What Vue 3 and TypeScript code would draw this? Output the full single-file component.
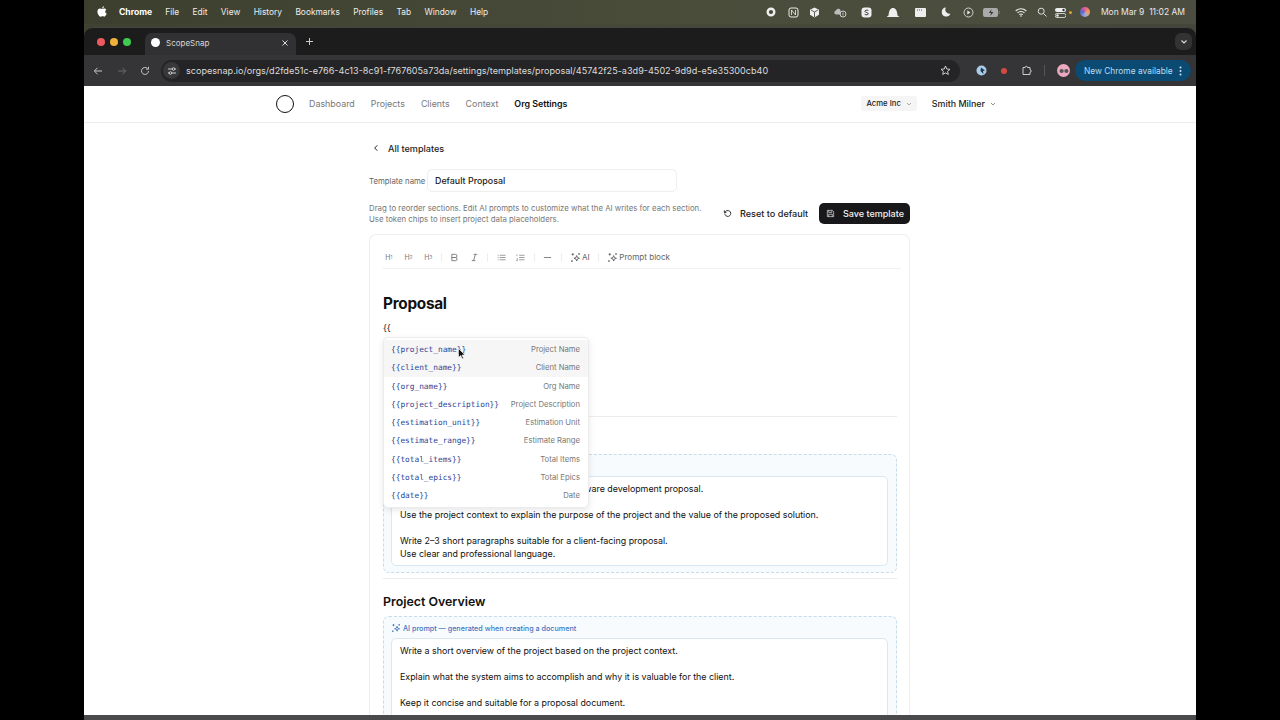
<script setup lang="ts">
const menus = ['File', 'Edit', 'View', 'History', 'Bookmarks', 'Profiles', 'Tab', 'Window', 'Help']
const navLinks = ['Dashboard', 'Projects', 'Clients', 'Context']
const tokens = [
  { code: '{{project_name}}', label: 'Project Name' },
  { code: '{{client_name}}', label: 'Client Name' },
  { code: '{{org_name}}', label: 'Org Name' },
  { code: '{{project_description}}', label: 'Project Description' },
  { code: '{{estimation_unit}}', label: 'Estimation Unit' },
  { code: '{{estimate_range}}', label: 'Estimate Range' },
  { code: '{{total_items}}', label: 'Total Items' },
  { code: '{{total_epics}}', label: 'Total Epics' },
  { code: '{{date}}', label: 'Date' },
]
const sparkle = 'M8.500 4.500l.9 2.600 2.600.9-2.600.9-.9 2.600-.9-2.600L5 8l2.600-.9zM3.500 1.500v3M2 3h3M11.500 1.500v2M10.500 2.500h2M2.500 10.500v2M1.500 11.500h2'
</script>

<template>
  <div class="stage">
    <div class="screen">
      <header class="menubar">
        <svg class="apple" viewBox="0 0 14 16" width="10" height="12"><path fill="#fff" d="M9.800 0c.1 1.200-.9 2.900-2.600 3C7 1.600 8.300.2 9.800 0zM7 3.900c.7 0 1.700-.8 3-.8 1.300 0 2.400.6 3 1.600-2.300 1.400-1.900 4.500.6 5.500-.6 1.700-2 4.400-3.500 4.400-.9 0-1.300-.6-2.500-.6s-1.700.6-2.500.6C3.300 14.600.6 10.800.6 7.600c0-2.800 1.800-4.400 3.500-4.400 1.200 0 2.200.7 2.900.7z"/></svg>
        <strong class="app-name">Chrome</strong>
        <span v-for="m in menus" :key="m" class="menu-item">{{ m }}</span>
        <div class="status">
          <svg width="10" height="10" viewBox="0 0 10 10"><circle cx="5" cy="5" r="3.300" fill="none" stroke="#eee" stroke-width="2.400"/></svg>
          <svg width="11" height="11" viewBox="0 0 11 11"><rect x="1" y="1" width="9" height="9" rx="2" fill="none" stroke="#eee"/><path d="M3.500 8V3l4 5V3" fill="none" stroke="#eee" stroke-width=".8"/></svg>
          <svg width="11" height="11" viewBox="0 0 11 11"><path d="M5.500.5l4.500 2.200v5L5.500 10.500 1 7.700v-5z" fill="#eee"/><path d="M2 3l3.500 2L9 3M5.500 5v5" stroke="#3d3f30" fill="none" stroke-width=".8"/></svg>
          <svg width="13" height="11" viewBox="0 0 13 11"><path d="M1 7a2 2 0 0 1 1-3.500A2.500 2.500 0 0 1 6.500 3v4.500H2z" fill="#bbb"/><circle cx="9" cy="7" r="3" fill="none" stroke="#ddd" stroke-width=".9"/><path d="M9 5.500v3" stroke="#ddd" stroke-width=".8"/></svg>
          <svg width="11" height="11" viewBox="0 0 11 11"><rect x=".5" y=".5" width="10" height="10" rx="3" fill="#eee"/><path d="M7.300 3.500C6 2.700 3.800 3.200 4 4.500s3.200.8 3.200 2.200-2.300 1.400-3.500.6" fill="none" stroke="#333" stroke-width="1"/></svg>
          <svg width="14" height="11" viewBox="0 0 14 11"><path d="M2.500 8.500C3 3 4.500 1 7 1s4 2 4.500 7.500l2 1.500H.5z" fill="#eee"/></svg>
          <svg width="11" height="9" viewBox="0 0 11 9"><rect width="11" height="9" rx="1" fill="#eee"/><path d="M2 2h1M4 2h1M6 2h1" stroke="#333" stroke-width=".8"/></svg>
          <svg width="10" height="10" viewBox="0 0 10 10"><path d="M5 .5A4.500 4.500 0 1 0 9.500 6.500 4 4 0 0 1 5 .5z" fill="#eee"/></svg>
          <svg width="11" height="11" viewBox="0 0 11 11"><circle cx="5.500" cy="5.500" r="4.500" fill="none" stroke="#eee" stroke-width=".8"/><path d="M4.300 3.500v4l3-2z" fill="#eee"/></svg>
          <svg width="17" height="9" viewBox="0 0 17 9"><rect width="15" height="9" rx="2" fill="#aaa"/><rect x="15.500" y="3" width="1.200" height="3" fill="#777"/><path d="M8.500 1L6 5h2.200l-1 3L10.500 4H8z" fill="#333"/></svg>
          <svg width="12" height="9" viewBox="0 0 12 9"><path d="M.7 3a7.500 7.500 0 0 1 10.600 0M2.500 4.900a5 5 0 0 1 7 0M4.300 6.700a2.400 2.400 0 0 1 3.400 0" fill="none" stroke="#eee" stroke-width="1.100"/><circle cx="6" cy="8" r=".8" fill="#eee"/></svg>
          <svg width="10" height="10" viewBox="0 0 10 10"><circle cx="4.200" cy="4.200" r="3" fill="none" stroke="#ddd"/><path d="M6.500 6.500l3 3" stroke="#ddd"/></svg>
          <span class="control-group">
            <svg width="11" height="11" viewBox="0 0 11 11"><rect y="1" width="11" height="4" rx="2" fill="#eee"/><rect y="6.500" width="11" height="4" rx="2" fill="none" stroke="#eee" stroke-width=".8"/><circle cx="8.500" cy="3" r="1.200" fill="#333"/><circle cx="2.500" cy="8.500" r="1.200" fill="#eee"/></svg>
            <i class="orange-dot"></i>
          </span>
          <i class="siri"></i>
        </div>
        <span class="clock">Mon Mar 9&nbsp; 11:02 AM</span>
      </header>

      <div class="tabstrip">
        <div class="lights">
          <i class="light red"></i>
          <i class="light amber"></i>
          <i class="light green"></i>
        </div>
        <div class="tab">
          <i class="favicon"></i>
          <span class="tab-title">ScopeSnap</span>
          <svg width="8" height="8" viewBox="0 0 8 8"><path d="M1.500 1.500l5 5M6.500 1.500l-5 5" stroke="#ddd" stroke-width="1"/></svg>
        </div>
        <svg class="newtab" width="9" height="9" viewBox="0 0 9 9"><path d="M4.500 1v7M1 4.500h7" stroke="#ccc" stroke-width="1"/></svg>
        <span class="tab-search">
          <svg width="8" height="6" viewBox="0 0 8 6"><path d="M1.500 1.500L4 4l2.500-2.500" fill="none" stroke="#ddd" stroke-width="1.100"/></svg>
        </span>
      </div>

      <div class="toolbar">
        <svg width="10" height="10" viewBox="0 0 10 10"><path d="M9 5H1.500M4.500 1.800L1.300 5l3.200 3.200" fill="none" stroke="#c8c8c8" stroke-width="1"/></svg>
        <svg width="10" height="10" viewBox="0 0 10 10"><path d="M1 5h7.500M5.500 1.800L8.700 5 5.500 8.200" fill="none" stroke="#6b6b6b" stroke-width="1"/></svg>
        <svg width="10" height="10" viewBox="0 0 10 10"><path d="M8.500 5A3.500 3.500 0 1 1 7.400 2.400M8.500 .8v2.400H6.100" fill="none" stroke="#c8c8c8" stroke-width="1"/></svg>
        <div class="omnibox">
          <span class="site-icon">
            <svg width="10" height="10" viewBox="0 0 10 10"><path d="M1 3h4M8 3h1M1 7h1M5 7h4" stroke="#ddd" stroke-width=".9"/><circle cx="6.500" cy="3" r="1.300" fill="none" stroke="#ddd" stroke-width=".9"/><circle cx="3.500" cy="7" r="1.300" fill="none" stroke="#ddd" stroke-width=".9"/></svg>
          </span>
          <span class="url">scopesnap.io/orgs/d2fde51c-e766-4c13-8c91-f767605a73da/settings/templates/proposal/45742f25-a3d9-4502-9d9d-e5e35300cb40</span>
          <svg class="star" width="11" height="11" viewBox="0 0 11 11"><path d="M5.500 1l1.300 3 3.200.3-2.400 2.100.7 3.100-2.800-1.600-2.800 1.600.7-3.100L1 4.300 4.200 4z" fill="none" stroke="#ddd" stroke-width=".9"/></svg>
        </div>
        <div class="extensions">
          <svg width="11" height="11" viewBox="0 0 11 11"><circle cx="5.500" cy="5.500" r="5" fill="#a9cde8"/><path d="M5 2.500l4 3-2 .5.500 3L4.500 6z" fill="#234"/></svg>
          <i class="ext-dot"></i>
          <svg width="11" height="11" viewBox="0 0 11 11"><path d="M2 2.500h2.200a1.200 1.200 0 0 1 2.400 0H9v2.300a1.200 1.200 0 0 1 0 2.400V9.500H2z" fill="none" stroke="#ddd" stroke-width=".9"/></svg>
          <i class="ext-sep"></i>
          <span class="avatar">
            <svg width="10" height="6" viewBox="0 0 10 6"><circle cx="2.600" cy="3" r="2.100" fill="#555"/><circle cx="7.400" cy="3" r="2.100" fill="#555"/></svg>
          </span>
        </div>
        <div class="update-pill">
          <span>New Chrome available</span>
          <svg width="3" height="10" viewBox="0 0 3 10"><circle cx="1.500" cy="1.500" r="1" fill="#cfe8f8"/><circle cx="1.500" cy="5" r="1" fill="#cfe8f8"/><circle cx="1.500" cy="8.500" r="1" fill="#cfe8f8"/></svg>
        </div>
      </div>

      <main class="page">
        <nav class="topnav">
          <i class="logo"></i>
          <a v-for="l in navLinks" :key="l" class="nav-link">{{ l }}</a>
          <a class="nav-link current">Org Settings</a>
          <div class="nav-right">
            <span class="org-switch">Acme Inc
              <svg width="6" height="4" viewBox="0 0 6 4"><path d="M1 1l2 2 2-2" fill="none" stroke="#888" stroke-width=".7"/></svg>
            </span>
            <span class="user-menu">Smith Milner
              <svg width="6" height="4" viewBox="0 0 6 4"><path d="M1 1l2 2 2-2" fill="none" stroke="#666" stroke-width=".7"/></svg>
            </span>
          </div>
        </nav>

        <section class="content">
          <div class="back-row">
            <svg width="6" height="8" viewBox="0 0 6 8"><path d="M4.300 1.300L1.700 4l2.600 2.700" fill="none" stroke="#222" stroke-width="1"/></svg>
            <span>All templates</span>
          </div>

          <div class="name-row">
            <label class="name-label">Template name</label>
            <div class="name-input">Default Proposal</div>
          </div>

          <div class="help-row">
            <p class="help">Drag to reorder sections. Edit AI prompts to customize what the AI writes for each section.<br>Use token chips to insert project data placeholders.</p>
            <button class="btn-reset">
              <svg width="9" height="9" viewBox="0 0 10 10"><path d="M2 5a3.300 3.300 0 1 0 1-2.400L1.500 3.800M1.500 1.500v2.300h2.300" fill="none" stroke="#222" stroke-width="1"/></svg>
              Reset to default
            </button>
            <button class="btn-save">
              <svg width="9" height="9" viewBox="0 0 10 10"><path d="M1.500 1.500h5.500l1.500 1.500v5.500h-7zM3 1.500v2.300h3.500V1.500M3 8.500V5.800h4v2.700" fill="none" stroke="#ddd" stroke-width=".8"/></svg>
              Save template
            </button>
          </div>

          <div class="editor">
            <div class="editor-tools">
              <span class="tool t-h">H<sub>1</sub></span>
              <span class="tool t-h">H<sub>2</sub></span>
              <span class="tool t-h">H<sub>3</sub></span>
              <i class="t-sep"></i>
              <span class="tool"><svg width="9" height="9" viewBox="0 0 10 10"><path d="M2 1.500h4a1.700 1.700 0 0 1 0 3.500H2zM2 5h4.500a1.800 1.800 0 0 1 0 3.500H2z" fill="none" stroke="#777" stroke-width="1"/></svg></span>
              <span class="tool"><svg width="9" height="9" viewBox="0 0 10 10"><path d="M4 1.500h4M2 8.500h4M6 1.500L4 8.500" fill="none" stroke="#777" stroke-width="1"/></svg></span>
              <i class="t-sep"></i>
              <span class="tool"><svg width="9" height="9" viewBox="0 0 10 10"><path d="M3 2.500h6.500M3 5h6.500M3 7.500h6.500" stroke="#777" stroke-width=".8"/><path d="M.8 2.500h1M.8 5h1M.8 7.500h1" stroke="#777" stroke-width=".8"/></svg></span>
              <span class="tool"><svg width="9" height="9" viewBox="0 0 10 10"><path d="M3.500 2.500h6M3.500 5h6M3.500 7.500h6" stroke="#777" stroke-width=".8"/><path d="M1 1.500v2M.6 6.500h1.400L.6 8.500H2" fill="none" stroke="#777" stroke-width=".7"/></svg></span>
              <i class="t-sep"></i>
              <span class="tool"><svg width="9" height="9" viewBox="0 0 10 10"><path d="M1 5h8" stroke="#777" stroke-width="1"/></svg></span>
              <i class="t-sep"></i>
              <span class="t-text">
                <svg width="11" height="11" viewBox="0 0 14 14"><path :d="sparkle" fill="none" stroke="#666" stroke-width="1.200"/></svg>AI
              </span>
              <i class="t-sep"></i>
              <span class="t-text">
                <svg width="11" height="11" viewBox="0 0 14 14"><path :d="sparkle" fill="none" stroke="#666" stroke-width="1.200"/></svg>Prompt block
              </span>
            </div>

            <div class="doc">
              <h1 class="doc-title">Proposal</h1>
              <p class="doc-typing">{{ '{{' }}</p>
              <hr class="doc-rule first">
              <h2 class="doc-h2">Introduction</h2>
              <div class="prompt">
                <div class="prompt-label">
                  <svg width="10" height="10" viewBox="0 0 14 14"><path :d="sparkle" fill="none" stroke="#3f74bd" stroke-width="1.200"/></svg>
                  AI prompt — generated when creating a document
                </div>
                <div class="prompt-body">
                  <p>Write a professional introduction for the software development proposal.</p>
                  <p class="blank">&nbsp;</p>
                  <p>Use the project context to explain the purpose of the project and the value of the proposed solution.</p>
                  <p class="blank">&nbsp;</p>
                  <p>Write 2–3 short paragraphs suitable for a client-facing proposal.</p>
                  <p>Use clear and professional language.</p>
                </div>
              </div>
              <hr class="doc-rule">
              <h2 class="doc-h2">Project Overview</h2>
              <div class="prompt">
                <div class="prompt-label">
                  <svg width="10" height="10" viewBox="0 0 14 14"><path :d="sparkle" fill="none" stroke="#3f74bd" stroke-width="1.200"/></svg>
                  AI prompt — generated when creating a document
                </div>
                <div class="prompt-body">
                  <p>Write a short overview of the project based on the project context.</p>
                  <p class="blank">&nbsp;</p>
                  <p>Explain what the system aims to accomplish and why it is valuable for the client.</p>
                  <p class="blank">&nbsp;</p>
                  <p>Keep it concise and suitable for a proposal document.</p>
                </div>
              </div>
            </div>

            <ul class="token-menu">
              <li v-for="(t, i) in tokens" :key="t.code" class="token-row" :class="{ active: i < 2 }">
                <code>{{ t.code }}</code>
                <span>{{ t.label }}</span>
              </li>
            </ul>
            <svg class="cursor" width="8" height="12" viewBox="0 0 8 12"><path d="M.5.500v9l2.200-2 1.500 3.300 1.300-.6L4 7h3z" fill="#111" stroke="#fff" stroke-width=".6"/></svg>
          </div>
        </section>
      </main>
      <div class="bottom-strip"></div>
    </div>
  </div>
</template>

<style>
html, body {
  margin: 0;
  background: #000;
}
</style>

<style scoped>
.stage {
  width: 1280px;
  height: 720px;
  background: #000;
  display: flex;
  justify-content: center;
  overflow: hidden;
  font-family: Inter, "Liberation Sans", sans-serif;
}

.screen {
  width: 1112px;
  height: 720px;
  display: flex;
  flex-direction: column;
  background: linear-gradient(90deg, #3f4231, #454936 50%, #44463a);
}

.menubar {
  height: 24px;
  flex: none;
  display: flex;
  align-items: center;
  padding-left: 13px;
  color: #eee;
  font-size: 8.400px;
  background: linear-gradient(90deg, #3c3f2e, #4a4d3a 55%, #4b4d40);
}

.apple {
  margin-right: 12px;
}

.app-name {
  font-size: 8.600px;
  font-weight: 700;
  color: #fff;
  margin-right: 13px;
}

.menu-item {
  margin-right: 13.400px;
}

.status {
  margin-left: auto;
  display: flex;
  align-items: center;
}

.status > :nth-child(2) { margin-left: 12px; }
.status > :nth-child(3) { margin-left: 10px; }
.status > :nth-child(4) { margin-left: 14px; }
.status > :nth-child(5) { margin-left: 14px; }
.status > :nth-child(6) { margin-left: 14px; }
.status > :nth-child(7) { margin-left: 15px; }
.status > :nth-child(8) { margin-left: 15px; }
.status > :nth-child(9) { margin-left: 12px; }
.status > :nth-child(10) { margin-left: 9px; }
.status > :nth-child(11) { margin-left: 15px; }
.status > :nth-child(12) { margin-left: 10px; }
.status > :nth-child(13) { margin-left: 8px; }
.status > :nth-child(14) { margin-left: 8px; }

.control-group {
  display: flex;
  align-items: center;
  gap: 3px;
}

.orange-dot {
  width: 3px;
  height: 3px;
  border-radius: 50%;
  background: #e0a030;
}

.siri {
  width: 10px;
  height: 10px;
  border-radius: 50%;
  background: conic-gradient(#e85a9a, #f0a050, #9ad, #56c, #e85a9a);
}

.clock {
  margin-left: 11px;
  margin-right: 11px;
  font-size: 8.500px;
  color: #e8e8e8;
}

.tabstrip {
  margin-top: 3px;
  height: 28px;
  flex: none;
  display: flex;
  align-items: flex-end;
  background: #1c1c1d;
  border-top: 1px solid #444;
  border-radius: 9px 9px 0 0;
  box-sizing: border-box;
  padding-left: 13px;
}

.lights {
  display: flex;
  gap: 5px;
  align-self: center;
  width: 48px;
}

.light {
  width: 8px;
  height: 8px;
  border-radius: 50%;
}

.red { background: #ec5a5f; }
.amber { background: #f0b23a; }
.green { background: #3fcb50; }

.tab {
  width: 151px;
  height: 22px;
  box-sizing: border-box;
  display: flex;
  align-items: center;
  padding: 0 7px 3px 6px;
  background: #313133;
  border-radius: 7px 7px 0 0;
  color: #d8d8d8;
  font-size: 8px;
}

.favicon {
  width: 9px;
  height: 9px;
  border-radius: 50%;
  background: #fff;
  margin-right: 6px;
}

.tab-title {
  flex: 1;
}

.newtab {
  align-self: center;
  margin-left: 9px;
}

.tab-search {
  margin-left: auto;
  margin-right: 4px;
  align-self: center;
  width: 17px;
  height: 17px;
  border-radius: 6px;
  background: #333;
  display: flex;
  align-items: center;
  justify-content: center;
}

.toolbar {
  height: 31px;
  flex: none;
  display: flex;
  align-items: center;
  gap: 13.500px;
  padding-left: 9px;
  background: #353537;
  box-sizing: border-box;
}

.omnibox {
  width: 799px;
  height: 22px;
  margin-left: -2.500px;
  display: flex;
  align-items: center;
  border-radius: 11px;
  background: #242426;
  padding-left: 2px;
  box-sizing: border-box;
}

.site-icon {
  width: 17px;
  height: 17px;
  border-radius: 50%;
  background: #38383a;
  display: flex;
  align-items: center;
  justify-content: center;
}

.url {
  margin-left: 6px;
  font-size: 9.110px;
  color: #dcdcdc;
  white-space: nowrap;
}

.star {
  margin-left: auto;
  margin-right: 9px;
}

.extensions {
  display: flex;
  align-items: center;
  gap: 13px;
  margin-left: 2.500px;
}

.ext-dot {
  width: 6px;
  height: 6px;
  border-radius: 50%;
  background: #d6493e;
  margin: 0 1px;
}

.ext-sep {
  width: 1px;
  height: 11px;
  background: #555;
  margin-left: -1px;
}

.avatar {
  width: 13px;
  height: 13px;
  border-radius: 50%;
  background: #eda9c0;
  display: flex;
  align-items: center;
  justify-content: center;
  margin-left: -1px;
}

.update-pill {
  width: 116px;
  height: 21px;
  margin-left: -8.500px;
  box-sizing: border-box;
  padding: 0 9px;
  border-radius: 11px;
  background: #0b4a72;
  color: #b9dcf2;
  font-size: 8.400px;
  display: flex;
  align-items: center;
  justify-content: space-between;
}

.page {
  height: 629px;
  flex: none;
  background: #fff;
  overflow: hidden;
  color: #111;
}

.topnav {
  height: 37px;
  box-sizing: border-box;
  display: flex;
  align-items: center;
  padding-left: 192px;
  padding-bottom: 1px;
  border-bottom: 1px solid #ececec;
  font-size: 8.900px;
}

.logo {
  width: 18px;
  height: 18px;
  box-sizing: border-box;
  border-radius: 50%;
  border: 1.200px solid #111;
  margin-right: 15px;
}

.nav-link {
  color: #777;
  margin-right: 16px;
}

.nav-link.current {
  color: #111;
  font-weight: 600;
}

.nav-right {
  margin-left: auto;
  margin-right: 200px;
  display: flex;
  align-items: center;
  gap: 15px;
}

.org-switch {
  display: flex;
  align-items: center;
  gap: 5px;
  padding: 3px 5px;
  border-radius: 3px;
  background: #f5f5f5;
  font-size: 7.700px;
  font-weight: 500;
  color: #222;
}

.user-menu {
  display: flex;
  align-items: center;
  gap: 5px;
  font-weight: 500;
  color: #222;
}

.content {
  width: 541px;
  margin-left: 285px;
}

.back-row {
  margin-top: 19px;
  height: 12px;
  display: flex;
  align-items: center;
  gap: 9px;
  padding-left: 4px;
  font-size: 9.100px;
  font-weight: 500;
  color: #222;
}

.name-row {
  margin-top: 15px;
  display: flex;
  align-items: center;
}

.name-label {
  width: 58px;
  font-size: 7.800px;
  color: #666;
  white-space: nowrap;
}

.name-input {
  width: 250px;
  height: 23px;
  box-sizing: border-box;
  display: flex;
  align-items: center;
  padding-left: 7px;
  border: 1px solid #eeeeee;
  border-radius: 5px;
  font-size: 8.900px;
  font-weight: 500;
  color: #222;
}

.help-row {
  margin-top: 11px;
  display: flex;
  align-items: center;
}

.help {
  margin: 0;
  width: 345px;
  font-size: 7.820px;
  line-height: 10.300px;
  color: #777;
  white-space: nowrap;
}

.btn-reset,
.btn-save {
  border: 0;
  font-family: inherit;
  font-size: 9px;
  font-weight: 500;
  display: flex;
  align-items: center;
}

.btn-reset {
  background: none;
  color: #222;
  padding: 0;
  gap: 8px;
  margin-left: 9px;
  font-size: 9.100px;
}

.btn-save {
  margin-left: auto;
  width: 91px;
  height: 21px;
  box-sizing: border-box;
  padding-left: 7px;
  gap: 8px;
  background: #18181a;
  color: #f2f2f2;
  border-radius: 5px;
}

.editor {
  margin-top: 10px;
  position: relative;
  border: 1px solid #eeeeee;
  border-bottom: 0;
  border-radius: 7px 7px 0 0;
  padding: 12px 12px 0 13px;
  height: 500px;
  box-sizing: border-box;
}

.editor-tools {
  height: 22px;
  margin-right: -4px;
  display: flex;
  align-items: center;
  padding-left: 0;
  padding-bottom: 1px;
  border-bottom: 1px solid #f0f0f0;
  box-sizing: border-box;
  color: #777;
}

.tool {
  width: 19.700px;
  display: flex;
  align-items: center;
  justify-content: center;
}

.editor-tools > :first-child {
  margin-left: -4px;
}

.t-h {
  font-size: 7px;
  color: #777;
}

.t-h sub {
  font-size: 4.500px;
  vertical-align: baseline;
}

.t-sep {
  width: 1px;
  height: 9px;
  margin: 0 3px;
  background: #eee;
}

.t-text {
  display: flex;
  align-items: center;
  gap: 1.500px;
  padding: 0 5px;
  font-size: 8.100px;
  color: #666;
}

.doc {
  padding-top: 27px;
}

.doc-title {
  margin: 0;
  font-size: 15.300px;
  line-height: 16px;
  font-weight: 700;
  color: #111;
  letter-spacing: -.25px;
}

.doc-typing {
  margin: 9px 0 0;
  font-size: 9px;
  line-height: 13px;
  color: #111;
}

.doc-rule {
  margin: 0;
  border: 0;
  border-top: 1px solid #ededed;
  width: 514px;
}

.doc-rule.first {
  margin-top: 82px;
}

.doc-h2 {
  margin: 15px 0 7px;
  font-size: 12.400px;
  line-height: 15px;
  font-weight: 600;
  color: #111;
}

.prompt {
  width: 514px;
  box-sizing: border-box;
  padding: 5px 8px 6px 7px;
  border: 1px dashed #c5dcea;
  border-radius: 6px;
  background: #f8fbfe;
  margin-bottom: 5px;
}

.prompt-label {
  height: 12px;
  display: flex;
  align-items: center;
  gap: 2px;
  font-size: 7.200px;
  font-weight: 500;
  color: #3f74bd;
}

.prompt-body {
  margin-top: 4px;
  padding: 5px 8px;
  background: #fff;
  border: 1px solid #d9e8f3;
  border-radius: 5px;
  font-size: 8.870px;
  line-height: 13px;
  color: #111;
  height: 90px;
  box-sizing: border-box;
}

.prompt-body p {
  margin: 0;
  white-space: nowrap;
}

.token-menu {
  position: absolute;
  left: 13px;
  top: 102.400px;
  width: 206px;
  margin: 0;
  padding: 2px 0;
  list-style: none;
  box-sizing: border-box;
  background: #fff;
  border: 1px solid #ececec;
  border-radius: 5px;
  box-shadow: 0 2px 6px rgba(0, 0, 0, .1);
  overflow: hidden;
}

.token-row {
  height: 18.250px;
  display: flex;
  align-items: center;
  justify-content: space-between;
  padding: 0 8px 0 7px;
  white-space: nowrap;
}

.token-row.active {
  background: #f6f6f6;
}

.token-row code {
  font-family: "DejaVu Sans Mono", "Liberation Mono", monospace;
  font-size: 7.800px;
  color: #2b4596;
}

.token-row span {
  font-size: 7.700px;
  color: #777;
}

.cursor {
  position: absolute;
  left: 88px;
  top: 113px;
}

.bottom-strip {
  flex: 1;
  background: #4a4a4c;
}
</style>
